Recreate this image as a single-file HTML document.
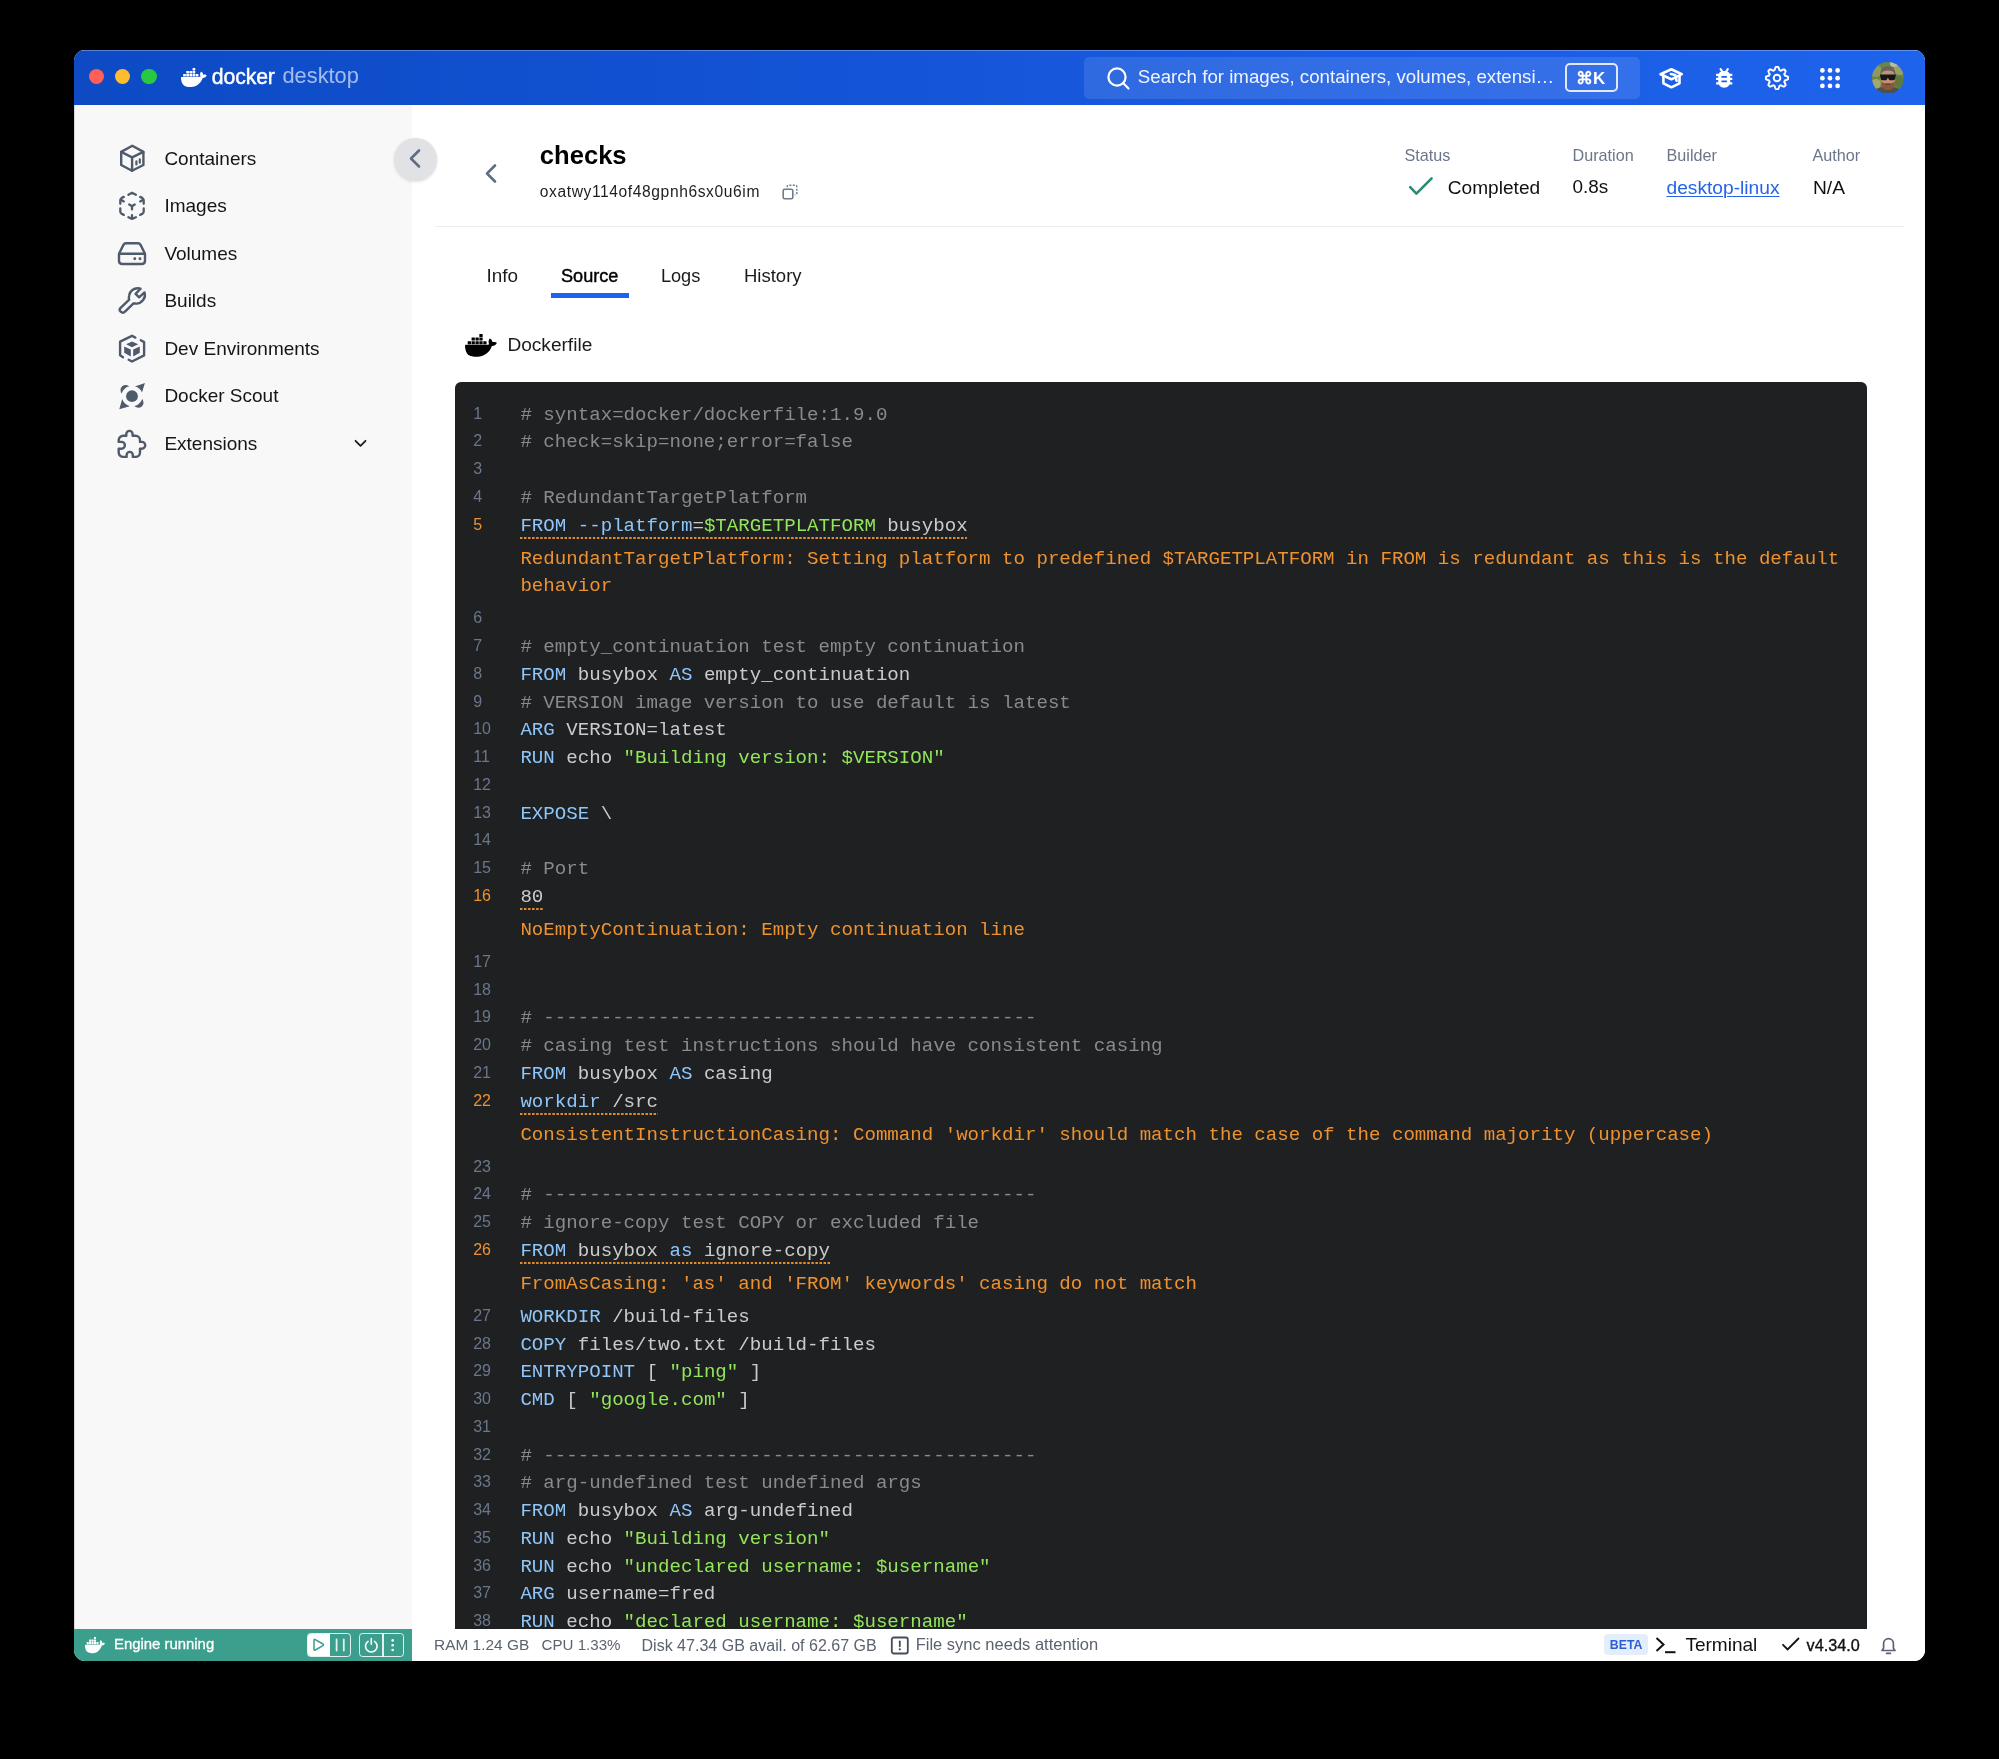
<!DOCTYPE html><html><head><meta charset="utf-8"><style>
*{margin:0;padding:0;box-sizing:border-box}
html,body{width:1999px;height:1759px;background:#000;overflow:hidden}
body{font-family:"Liberation Sans",sans-serif;position:relative;-webkit-font-smoothing:antialiased}
.t,.code{transform:translateZ(0)}
.win{position:absolute;left:74px;top:50px;width:1851px;height:1610.5px;border-radius:11px;overflow:hidden;background:#fff}
.in{position:absolute;left:-74px;top:-50px;width:1999px;height:1759px}
.a{position:absolute}
.t{position:absolute;white-space:pre}
.tb{position:absolute;left:74px;top:50px;width:1851px;height:55px;background:linear-gradient(90deg,#0d4ac4 0%,#1252d3 35%,#1a5ce3 70%,#1e63ec 100%)}
.side{position:absolute;left:74px;top:105px;width:337.5px;height:1524px;background:#f8f8f8}
.code{position:absolute;left:454.8px;top:381.5px;width:1412.2px;height:1400px;background:#1f2022;border-radius:6px;font-family:"Liberation Mono",monospace}
.rows{position:absolute;left:0;top:18.5px;width:100%;will-change:transform}
.row{position:relative;height:27.75px;line-height:27.75px;white-space:pre}
.ln{position:absolute;left:18.2px;top:-0.5px;font-family:"Liberation Sans",sans-serif;font-size:16px;color:#6a778b}
.cd{position:absolute;left:65.4px;top:1.5px;font-size:19.11px;color:#cbcbcb}
.wn .ln{color:#ee9230}
.warn{position:relative;padding:5.25px 0;}
.warn .wl{position:relative;top:1.5px;height:27.75px;line-height:27.75px;padding-left:65.4px;font-size:19.11px;color:#ee9230;white-space:pre}
.k{color:#8ec6fa}.c{color:#8a8a8a}.s{color:#93e65a}
.ul{position:absolute;left:65px;top:25.8px;height:2px;background:linear-gradient(90deg,#e08d30 0,#e08d30 2.1px,transparent 2.1px) 0 0/4.06px 2px repeat-x}
.sb{position:absolute;left:74px;top:1629px;width:1851px;height:31.5px;background:#fff}
.eng{position:absolute;left:74px;top:1629px;width:337.5px;height:31.5px;background:#3c9f8d}
.navt{font-size:19px;color:#151515}
</style></head><body><div class="win"><div class="in"><div class="tb"></div><div class="a" style="left:74px;top:50px;width:1851px;height:1px;background:rgba(255,255,255,.3)"></div><div class="a" style="left:88.55px;top:68.55px;width:15.5px;height:15.5px;border-radius:50%;background:#fe5f57"></div><div class="a" style="left:114.75px;top:68.55px;width:15.5px;height:15.5px;border-radius:50%;background:#febc2e"></div><div class="a" style="left:141.45px;top:68.55px;width:15.5px;height:15.5px;border-radius:50%;background:#28c840"></div><svg class="a" style="left:180.5px;top:68px;width:25.5px;height:19px;overflow:visible" viewBox="0 3.39 23.86 17.22" preserveAspectRatio="none"><path fill="#fff" d="M13.983 11.078h2.119a.186.186 0 00.186-.185V9.006a.186.186 0 00-.186-.186h-2.119a.185.185 0 00-.185.185v1.888c0 .102.083.185.185.185m-2.954-5.43h2.118a.186.186 0 00.186-.186V3.574a.186.186 0 00-.186-.185h-2.118a.185.185 0 00-.185.185v1.888c0 .102.082.185.185.185m0 2.716h2.118a.187.187 0 00.186-.186V6.29a.186.186 0 00-.186-.185h-2.118a.185.185 0 00-.185.185v1.887c0 .102.082.185.185.186m-2.93 0h2.12a.186.186 0 00.184-.186V6.29a.185.185 0 00-.185-.185H8.1a.185.185 0 00-.185.185v1.887c0 .102.083.185.185.186m-2.964 0h2.119a.186.186 0 00.185-.186V6.29a.185.185 0 00-.185-.185H5.136a.186.186 0 00-.186.185v1.887c0 .102.084.185.186.186m5.893 2.715h2.118a.186.186 0 00.186-.185V9.006a.186.186 0 00-.186-.186h-2.118a.185.185 0 00-.185.185v1.888c0 .102.082.185.185.185m-2.93 0h2.12a.185.185 0 00.184-.185V9.006a.185.185 0 00-.184-.186h-2.12a.185.185 0 00-.184.185v1.888c0 .102.083.185.185.185m-2.964 0h2.119a.185.185 0 00.185-.185V9.006a.185.185 0 00-.184-.186h-2.12a.186.186 0 00-.186.186v1.887c0 .102.084.185.186.185m-2.92 0h2.12a.185.185 0 00.184-.185V9.006a.185.185 0 00-.184-.186h-2.12a.185.185 0 00-.184.185v1.888c0 .102.082.185.185.185M23.763 9.89c-.065-.051-.672-.51-1.954-.51-.338.001-.676.03-1.01.087-.248-1.7-1.653-2.53-1.716-2.566l-.344-.199-.226.327c-.284.438-.49.922-.612 1.43-.23.97-.09 1.882.403 2.661-.595.332-1.55.413-1.744.42H.751a.751.751 0 00-.75.748 11.376 11.376 0 00.692 4.062c.545 1.428 1.355 2.48 2.41 3.124 1.18.723 3.1 1.137 5.275 1.137.983.003 1.963-.086 2.93-.266a12.248 12.248 0 003.823-1.389c.98-.567 1.86-1.288 2.61-2.136 1.252-1.418 1.998-2.997 2.553-4.4h.221c1.372 0 2.215-.549 2.68-1.009.309-.293.55-.65.707-1.046l.098-.288Z"/></svg><div class="t " style="left:211.80px;top:65.55px;font-size:21.2px;line-height:21.2px;color:#fff;-webkit-text-stroke:0.45px #fff;letter-spacing:-0.1px">docker</div><div class="t " style="left:282.50px;top:65.05px;font-size:21.8px;line-height:21.8px;color:rgba(255,255,255,.62)">desktop</div><div class="a" style="left:1084.2px;top:57.1px;width:555.5px;height:42.2px;border-radius:5px;background:rgba(255,255,255,.11)"></div><svg class="a" style="left:1105px;top:65px;width:26px;height:26px" viewBox="0 0 26 26"><circle cx="12" cy="12" r="8.6" fill="none" stroke="#fff" stroke-width="2.2"/><path d="M18.3 18.3l5.2 5.2" stroke="#fff" stroke-width="2.2" stroke-linecap="round"/></svg><div class="t " style="left:1137.80px;top:68.17px;font-size:18.7px;line-height:18.7px;color:rgba(255,255,255,.93)">Search for images, containers, volumes, extensi…</div><div class="a" style="left:1565px;top:63.4px;width:52.8px;height:29px;border:2px solid rgba(255,255,255,.85);border-radius:5px"></div><div class="t " style="left:1576.00px;top:70.11px;font-size:17px;line-height:17px;color:#fff;font-weight:bold">⌘K</div><svg class="a" style="left:1652px;top:60px;width:36px;height:36px" viewBox="0 0 36 36"><g fill="none" stroke="#fff" stroke-width="2.6" stroke-linejoin="round" stroke-linecap="round"><path d="M8.5 14.2L19.4 9.3 29.8 14.2 19.4 19.3Z"/><path d="M11.4 15.6V23.3L19.4 27.3 27.5 23.3V15.6"/><path d="M18.9 14L23.2 14.9 24.6 20.8"/></g></svg><svg class="a" style="left:1715px;top:68px;width:19px;height:21px" viewBox="0 0 19 21"><path fill="#fff" d="M3.2 8.3C3.2 5 5.5 3.1 9.2 3.1S15.2 5 15.2 8.3V13.6C15.2 17.4 12.7 19.7 9.2 19.7S3.2 17.4 3.2 13.6Z"/><g stroke="#fff" stroke-width="2.1" stroke-linecap="round"><path d="M5.6 1.1L7.3 3.6M12.8 1.1L11.1 3.6"/><path d="M1.1 6.9H17.3M1.1 10.9H17.3M1.1 15.4H17.3" stroke-linecap="butt"/></g><g stroke="#1c60e8" stroke-width="1.9" stroke-linecap="round"><path d="M7.2 8.9H11.2M7.2 13.4H11.2"/></g></svg><svg class="a" style="left:1765px;top:65.8px;width:24px;height:24px" viewBox="0 0 24 24"><path fill="none" stroke="#fff" stroke-width="2" stroke-linejoin="round" d="M12.00 0.85 L12.22 0.85 L12.44 0.86 L12.66 0.87 L12.87 0.88 L13.09 0.97 L13.28 1.22 L13.45 1.51 L13.61 1.82 L13.76 2.15 L13.89 2.49 L14.01 2.82 L14.12 3.16 L14.22 3.47 L14.32 3.77 L14.41 4.04 L14.55 4.15 L14.70 4.21 L14.86 4.26 L15.01 4.32 L15.16 4.38 L15.31 4.44 L15.45 4.51 L15.60 4.58 L15.75 4.65 L15.92 4.67 L16.18 4.54 L16.46 4.40 L16.75 4.25 L17.06 4.09 L17.39 3.93 L17.72 3.79 L18.06 3.66 L18.39 3.56 L18.72 3.48 L19.03 3.43 L19.24 3.52 L19.41 3.67 L19.57 3.81 L19.73 3.96 L19.88 4.12 L20.04 4.27 L20.19 4.43 L20.33 4.59 L20.48 4.76 L20.57 4.97 L20.52 5.28 L20.44 5.61 L20.34 5.94 L20.21 6.28 L20.07 6.61 L19.91 6.94 L19.75 7.25 L19.60 7.54 L19.46 7.82 L19.33 8.08 L19.35 8.25 L19.42 8.40 L19.49 8.55 L19.56 8.69 L19.62 8.84 L19.68 8.99 L19.74 9.14 L19.79 9.30 L19.85 9.45 L19.96 9.59 L20.23 9.68 L20.53 9.78 L20.84 9.88 L21.18 9.99 L21.51 10.11 L21.85 10.24 L22.18 10.39 L22.49 10.55 L22.78 10.72 L23.03 10.91 L23.12 11.13 L23.13 11.34 L23.14 11.56 L23.15 11.78 L23.15 12.00 L23.15 12.22 L23.14 12.44 L23.13 12.66 L23.12 12.87 L23.03 13.09 L22.78 13.28 L22.49 13.45 L22.18 13.61 L21.85 13.76 L21.51 13.89 L21.18 14.01 L20.84 14.12 L20.53 14.22 L20.23 14.32 L19.96 14.41 L19.85 14.55 L19.79 14.70 L19.74 14.86 L19.68 15.01 L19.62 15.16 L19.56 15.31 L19.49 15.45 L19.42 15.60 L19.35 15.75 L19.33 15.92 L19.46 16.18 L19.60 16.46 L19.75 16.75 L19.91 17.06 L20.07 17.39 L20.21 17.72 L20.34 18.06 L20.44 18.39 L20.52 18.72 L20.57 19.03 L20.48 19.24 L20.33 19.41 L20.19 19.57 L20.04 19.73 L19.88 19.88 L19.73 20.04 L19.57 20.19 L19.41 20.33 L19.24 20.48 L19.03 20.57 L18.72 20.52 L18.39 20.44 L18.06 20.34 L17.72 20.21 L17.39 20.07 L17.06 19.91 L16.75 19.75 L16.46 19.60 L16.18 19.46 L15.92 19.33 L15.75 19.35 L15.60 19.42 L15.45 19.49 L15.31 19.56 L15.16 19.62 L15.01 19.68 L14.86 19.74 L14.70 19.79 L14.55 19.85 L14.41 19.96 L14.32 20.23 L14.22 20.53 L14.12 20.84 L14.01 21.18 L13.89 21.51 L13.76 21.85 L13.61 22.18 L13.45 22.49 L13.28 22.78 L13.09 23.03 L12.87 23.12 L12.66 23.13 L12.44 23.14 L12.22 23.15 L12.00 23.15 L11.78 23.15 L11.56 23.14 L11.34 23.13 L11.13 23.12 L10.91 23.03 L10.72 22.78 L10.55 22.49 L10.39 22.18 L10.24 21.85 L10.11 21.51 L9.99 21.18 L9.88 20.84 L9.78 20.53 L9.68 20.23 L9.59 19.96 L9.45 19.85 L9.30 19.79 L9.14 19.74 L8.99 19.68 L8.84 19.62 L8.69 19.56 L8.55 19.49 L8.40 19.42 L8.25 19.35 L8.08 19.33 L7.82 19.46 L7.54 19.60 L7.25 19.75 L6.94 19.91 L6.61 20.07 L6.28 20.21 L5.94 20.34 L5.61 20.44 L5.28 20.52 L4.97 20.57 L4.76 20.48 L4.59 20.33 L4.43 20.19 L4.27 20.04 L4.12 19.88 L3.96 19.73 L3.81 19.57 L3.67 19.41 L3.52 19.24 L3.43 19.03 L3.48 18.72 L3.56 18.39 L3.66 18.06 L3.79 17.72 L3.93 17.39 L4.09 17.06 L4.25 16.75 L4.40 16.46 L4.54 16.18 L4.67 15.92 L4.65 15.75 L4.58 15.60 L4.51 15.45 L4.44 15.31 L4.38 15.16 L4.32 15.01 L4.26 14.86 L4.21 14.70 L4.15 14.55 L4.04 14.41 L3.77 14.32 L3.47 14.22 L3.16 14.12 L2.82 14.01 L2.49 13.89 L2.15 13.76 L1.82 13.61 L1.51 13.45 L1.22 13.28 L0.97 13.09 L0.88 12.87 L0.87 12.66 L0.86 12.44 L0.85 12.22 L0.85 12.00 L0.85 11.78 L0.86 11.56 L0.87 11.34 L0.88 11.13 L0.97 10.91 L1.22 10.72 L1.51 10.55 L1.82 10.39 L2.15 10.24 L2.49 10.11 L2.82 9.99 L3.16 9.88 L3.47 9.78 L3.77 9.68 L4.04 9.59 L4.15 9.45 L4.21 9.30 L4.26 9.14 L4.32 8.99 L4.38 8.84 L4.44 8.69 L4.51 8.55 L4.58 8.40 L4.65 8.25 L4.67 8.08 L4.54 7.82 L4.40 7.54 L4.25 7.25 L4.09 6.94 L3.93 6.61 L3.79 6.28 L3.66 5.94 L3.56 5.61 L3.48 5.28 L3.43 4.97 L3.52 4.76 L3.67 4.59 L3.81 4.43 L3.96 4.27 L4.12 4.12 L4.27 3.96 L4.43 3.81 L4.59 3.67 L4.76 3.52 L4.97 3.43 L5.28 3.48 L5.61 3.56 L5.94 3.66 L6.28 3.79 L6.61 3.93 L6.94 4.09 L7.25 4.25 L7.54 4.40 L7.82 4.54 L8.08 4.67 L8.25 4.65 L8.40 4.58 L8.55 4.51 L8.69 4.44 L8.84 4.38 L8.99 4.32 L9.14 4.26 L9.30 4.21 L9.45 4.15 L9.59 4.04 L9.68 3.77 L9.78 3.47 L9.88 3.16 L9.99 2.82 L10.11 2.49 L10.24 2.15 L10.39 1.82 L10.55 1.51 L10.72 1.22 L10.91 0.97 L11.13 0.88 L11.34 0.87 L11.56 0.86 L11.78 0.85 L12.00 0.85Z"/><circle cx="12" cy="12" r="3.3" fill="none" stroke="#fff" stroke-width="2"/></svg><svg class="a" style="left:1819.8px;top:67.7px;width:21px;height:21px" viewBox="0 0 21 21" fill="#fff"><circle cx="2.4" cy="2.4" r="2.35"/><circle cx="2.4" cy="10.15" r="2.35"/><circle cx="2.4" cy="17.9" r="2.35"/><circle cx="10.0" cy="2.4" r="2.35"/><circle cx="10.0" cy="10.15" r="2.35"/><circle cx="10.0" cy="17.9" r="2.35"/><circle cx="17.599999999999998" cy="2.4" r="2.35"/><circle cx="17.599999999999998" cy="10.15" r="2.35"/><circle cx="17.599999999999998" cy="17.9" r="2.35"/></svg><svg class="a" style="left:1872px;top:61.6px;width:31.8px;height:31.8px" viewBox="0 0 32 32"><defs><clipPath id="av"><circle cx="16" cy="16" r="16"/></clipPath><filter id="bl" x="-10%" y="-10%" width="120%" height="120%"><feGaussianBlur stdDeviation="0.6"/></filter></defs><g clip-path="url(#av)"><g filter="url(#bl)"><rect width="32" height="32" fill="#6d8446"/><circle cx="4" cy="9" r="6" fill="#8e9a5c"/><circle cx="28" cy="7" r="6" fill="#9aa06a"/><circle cx="27" cy="20" r="6" fill="#5d7a3c"/><circle cx="4" cy="22" r="5" fill="#a3a86a"/><circle cx="22" cy="1" r="4" fill="#b8bda0"/><path d="M2 32c1-5 5-7 14-7s13 2 14 7z" fill="#4d4f52"/><ellipse cx="16" cy="17" rx="7.4" ry="9.8" fill="#c29275"/><path d="M8.5 12.5C8.3 7 11 4.2 16 4.2S23.7 7 23.5 12.5C22.5 9.5 20 8.6 16 8.6S9.5 9.5 8.5 12.5Z" fill="#6a645c"/><path d="M9 19.5c.5 5.5 3 8.8 7 8.8s6.5-3.3 7-8.8c-1.5 1.3-3.5 2-7 2s-5.5-.7-7-2z" fill="#8c573a"/><path d="M13.5 22.3h5" stroke="#5b3424" stroke-width="0.9"/><path d="M8.2 12.6h15.6v1.6l-.7 2.8c-.3 1-1.2 1.4-2.5 1.4h-2.1c-1 0-1.6-.6-1.9-1.5l-.6-1.6-.6 1.6c-.3.9-.9 1.5-1.9 1.5h-2.1c-1.3 0-2.2-.4-2.5-1.4l-.7-2.8z" fill="#121212"/></g></g></svg><div class="side"></div><div class="a" style="left:74px;top:105px;width:1px;height:1524px;background:#d6d6d6"></div><div class="t navt" style="left:164.40px;top:148.62px;font-size:19px;line-height:19px;">Containers</div><div class="t navt" style="left:164.40px;top:196.12px;font-size:19px;line-height:19px;">Images</div><div class="t navt" style="left:164.40px;top:243.62px;font-size:19px;line-height:19px;">Volumes</div><div class="t navt" style="left:164.40px;top:291.12px;font-size:19px;line-height:19px;">Builds</div><div class="t navt" style="left:164.40px;top:338.62px;font-size:19px;line-height:19px;">Dev Environments</div><div class="t navt" style="left:164.40px;top:386.12px;font-size:19px;line-height:19px;">Docker Scout</div><div class="t navt" style="left:164.40px;top:433.62px;font-size:19px;line-height:19px;">Extensions</div><svg class="a" style="left:112px;top:140px;width:36px;height:36px" viewBox="0 0 36 36"><g fill="none" stroke="#4f5a6b" stroke-width="2.4" stroke-linejoin="round" stroke-linecap="round"><path d="M20.3 5.8L31.4 11.9V25L20 30.7 9.2 25V11.9Z"/><path d="M9.2 11.9L20.1 17.3 31.4 11.9M20.1 17.3V30.7"/><path d="M24.4 21.3V24.4M27.8 19.4V22.7" stroke-width="2.2"/></g></svg><svg class="a" style="left:116px;top:188px;width:36px;height:36px" viewBox="0 0 36 36"><g fill="none" stroke="#4f5a6b" stroke-width="2.3" stroke-linecap="round" stroke-linejoin="round"><path d="M12.4 6.8L16 4.8 19.9 6.8"/><path d="M4.3 15.8V12.3Q4.3 10.7 5.7 9.9L7.8 8.9M4.6 11.4L7.8 13.4"/><path d="M27.7 15.8V12.3Q27.7 10.7 26.3 9.9L24.2 8.9M27.4 11.4L24.2 13.4"/><path d="M4.3 20.3V23.6Q4.3 25 5.6 25.8L7.8 26.9"/><path d="M27.7 20.3V23.6Q27.7 25 26.4 25.8L24.2 26.9"/><path d="M12.4 29.3L16 30.9 19.9 29.3M16 27.2V30.9"/><path d="M13.2 16.5L16 18.2 18.7 16.5M16 18.2V21.4"/></g></svg><svg class="a" style="left:114px;top:236px;width:36px;height:36px" viewBox="0 0 36 36"><g fill="none" stroke="#4f5a6b" stroke-width="2.4" stroke-linejoin="round"><path d="M5 17.8L9.3 9.1Q10.2 7.3 12.2 7.3H23.8Q25.8 7.3 26.7 9.1L31 17.8V24.8Q31 28 27.8 28H8.2Q5 28 5 24.8Z"/><path d="M5 17.8H31"/></g><circle cx="20.8" cy="22.8" r="1.45" fill="#4f5a6b"/><circle cx="26" cy="22.8" r="1.45" fill="#4f5a6b"/></svg><svg class="a" style="left:114px;top:283px;width:36px;height:36px" viewBox="0 0 36 36"><path d="M6.4 25.1L15.2 16.6C14.8 15.4 14.8 13.8 15.2 12.2C16.1 7.8 19.9 5 24 5.2L26.6 5.7 21.6 10.9 25.1 14.3 30.5 9.4C31.3 11.8 31 14.6 29.1 17.1 27.1 19.6 24.6 20.8 22.1 20.6 21.1 20.5 20.1 20.2 19.5 20.4L11 28.6C9.8 29.8 7.9 29.8 6.7 28.7 5.5 27.5 5.3 26.2 6.4 25.1Z" fill="none" stroke="#4f5a6b" stroke-width="2.4" stroke-linejoin="round"/></svg><svg class="a" style="left:114px;top:330px;width:36px;height:36px" viewBox="0 0 36 36"><g fill="none" stroke="#4f5a6b" stroke-width="2.4" stroke-linecap="round" stroke-linejoin="round"><path d="M21.3 7.6L18 5.8 6.1 11.7V25.2L9 27.2"/><path d="M26.8 10.2L30.1 12.1V25.4L18 31.5 14.7 29.7"/></g><g fill="#4f5a6b"><path d="M12.1 14.3L18 11.5 24.2 14.3 18 17.2Z"/><path d="M10.2 16.4L16.8 19.6V26.4L10.2 22.7Z"/><path d="M25.8 16.4L19.2 19.6V26.4L25.8 22.7Z"/></g></svg><svg class="a" style="left:114px;top:377px;width:36px;height:36px" viewBox="0 0 36 36"><g fill="#4f5a6b"><circle cx="18" cy="19.2" r="5.9"/><path d="M7.6 16.6C5.8 13.5 6.5 10.5 8.5 9 10.5 7.5 13 7.8 15.3 9.3 12 10 9 12.5 7.6 16.6Z"/><path d="M20.9 9.4L30.9 6.1 28 15.6C27 12.5 24.5 10 20.9 9.4Z"/><path d="M8.2 22.1C9.5 25.5 12 28 15.8 29.3L5.3 32.3Z"/><path d="M28.2 22.1C30.2 25 29.8 28 27.5 29.8 25.5 31.3 22.5 30.8 20.3 29.3 24 28.5 27 25.5 28.2 22.1Z"/></g></svg><svg class="a" style="left:114px;top:425px;width:36px;height:36px" viewBox="0 0 36 36"><path d="M12.3 10.8V9A3.15 3.15 0 0 1 18.6 9V10.8H21.5A4.5 4.5 0 0 1 26 15.3V16.9H27.8A3.4 3.4 0 0 1 27.8 23.7H26V27.4A4.5 4.5 0 0 1 21.5 31.9H18.8V30A3.1 3.1 0 0 0 12.6 30V31.9H9.2A4.5 4.5 0 0 1 4.7 27.4V23.7H7.5A3.4 3.4 0 0 0 7.5 16.9H4.7V15.3A4.5 4.5 0 0 1 9.2 10.8Z" fill="none" stroke="#4f5a6b" stroke-width="2.4" stroke-linejoin="round"/></svg><svg class="a" style="left:353px;top:437px;width:15px;height:12px" viewBox="0 0 15 12"><path d="M2.5 3.8l5 5 5-5" fill="none" stroke="#1b1b1b" stroke-width="1.8" stroke-linecap="round" stroke-linejoin="round"/></svg><div class="a" style="left:394px;top:138px;width:42.5px;height:42.5px;border-radius:50%;background:#e1e2e6;box-shadow:0 1px 3px rgba(0,0,0,.12)"></div><svg class="a" style="left:405px;top:146px;width:20px;height:25px" viewBox="0 0 20 25"><path d="M14 4.5l-8 8 8 8" fill="none" stroke="#5f6d84" stroke-width="2.6" stroke-linecap="round" stroke-linejoin="round"/></svg><svg class="a" style="left:481px;top:161px;width:20px;height:25px" viewBox="0 0 20 25"><path d="M14 4.5l-8 8 8 8" fill="none" stroke="#5f6d84" stroke-width="2.6" stroke-linecap="round" stroke-linejoin="round"/></svg><div class="t " style="left:539.80px;top:142.73px;font-size:25.6px;line-height:25.6px;color:#000;font-weight:bold">checks</div><div class="t " style="left:539.80px;top:184.19px;font-size:15.6px;line-height:15.6px;color:#1e1e1e;letter-spacing:0.6px">oxatwy114of48gpnh6sx0u6im</div><svg class="a" style="left:781px;top:183px;width:18px;height:18px" viewBox="0 0 18 18"><rect x="2.2" y="6.2" width="9.6" height="9.6" rx="1.5" fill="none" stroke="#6f7a8d" stroke-width="1.6"/><path d="M6.2 4.2V3.5c0-.8.6-1.3 1.3-1.3h7c.8 0 1.3.6 1.3 1.3v7c0 .8-.6 1.3-1.3 1.3h-.7" fill="none" stroke="#6f7a8d" stroke-width="1.4" stroke-dasharray="2 1.4"/></svg><div class="t " style="left:1404.50px;top:146.54px;font-size:16.2px;line-height:16.2px;color:#6b7689">Status</div><div class="t " style="left:1572.50px;top:146.54px;font-size:16.2px;line-height:16.2px;color:#6b7689">Duration</div><div class="t " style="left:1666.50px;top:146.54px;font-size:16.2px;line-height:16.2px;color:#6b7689">Builder</div><div class="t " style="left:1812.50px;top:146.54px;font-size:16.2px;line-height:16.2px;color:#6b7689">Author</div><svg class="a" style="left:1407px;top:175px;width:28px;height:22px" viewBox="0 0 28 22"><path d="M3.2 12.2l6.2 6.4L24.6 3.4" fill="none" stroke="#2d8a74" stroke-width="2.6" stroke-linecap="round" stroke-linejoin="round"/></svg><div class="t " style="left:1447.80px;top:177.73px;font-size:19.1px;line-height:19.1px;color:#111">Completed</div><div class="t " style="left:1572.50px;top:177.90px;font-size:18.9px;line-height:18.9px;color:#111">0.8s</div><div class="t " style="left:1666.50px;top:177.65px;font-size:19.2px;line-height:19.2px;color:#2563e8;text-decoration:underline;text-underline-offset:2px;text-decoration-thickness:1px">desktop-linux</div><div class="t " style="left:1813.00px;top:177.65px;font-size:19.2px;line-height:19.2px;color:#111">N/A</div><div class="a" style="left:435px;top:226px;width:1468.5px;height:1px;background:#ececec"></div><div class="t " style="left:486.60px;top:266.70px;font-size:18.9px;line-height:18.9px;color:#1b1b1b">Info</div><div class="t " style="left:561.00px;top:266.68px;font-size:18.1px;line-height:18.1px;color:#000;-webkit-text-stroke:0.45px #000">Source</div><div class="t " style="left:660.90px;top:267.29px;font-size:18.2px;line-height:18.2px;color:#1b1b1b">Logs</div><div class="t " style="left:744.00px;top:267.04px;font-size:18.5px;line-height:18.5px;color:#1b1b1b">History</div><div class="a" style="left:550.5px;top:293px;width:78.3px;height:4.6px;background:#1d63ed"></div><svg class="a" style="left:464.8px;top:334px;width:31.599999999999966px;height:22.80000000000001px;overflow:visible" viewBox="0 3.39 23.86 17.22" preserveAspectRatio="none"><path fill="#000" d="M13.983 11.078h2.119a.186.186 0 00.186-.185V9.006a.186.186 0 00-.186-.186h-2.119a.185.185 0 00-.185.185v1.888c0 .102.083.185.185.185m-2.954-5.43h2.118a.186.186 0 00.186-.186V3.574a.186.186 0 00-.186-.185h-2.118a.185.185 0 00-.185.185v1.888c0 .102.082.185.185.185m0 2.716h2.118a.187.187 0 00.186-.186V6.29a.186.186 0 00-.186-.185h-2.118a.185.185 0 00-.185.185v1.887c0 .102.082.185.185.186m-2.93 0h2.12a.186.186 0 00.184-.186V6.29a.185.185 0 00-.185-.185H8.1a.185.185 0 00-.185.185v1.887c0 .102.083.185.185.186m-2.964 0h2.119a.186.186 0 00.185-.186V6.29a.185.185 0 00-.185-.185H5.136a.186.186 0 00-.186.185v1.887c0 .102.084.185.186.186m5.893 2.715h2.118a.186.186 0 00.186-.185V9.006a.186.186 0 00-.186-.186h-2.118a.185.185 0 00-.185.185v1.888c0 .102.082.185.185.185m-2.93 0h2.12a.185.185 0 00.184-.185V9.006a.185.185 0 00-.184-.186h-2.12a.185.185 0 00-.184.185v1.888c0 .102.083.185.185.185m-2.964 0h2.119a.185.185 0 00.185-.185V9.006a.185.185 0 00-.184-.186h-2.12a.186.186 0 00-.186.186v1.887c0 .102.084.185.186.185m-2.92 0h2.12a.185.185 0 00.184-.185V9.006a.185.185 0 00-.184-.186h-2.12a.185.185 0 00-.184.185v1.888c0 .102.082.185.185.185M23.763 9.89c-.065-.051-.672-.51-1.954-.51-.338.001-.676.03-1.01.087-.248-1.7-1.653-2.53-1.716-2.566l-.344-.199-.226.327c-.284.438-.49.922-.612 1.43-.23.97-.09 1.882.403 2.661-.595.332-1.55.413-1.744.42H.751a.751.751 0 00-.75.748 11.376 11.376 0 00.692 4.062c.545 1.428 1.355 2.48 2.41 3.124 1.18.723 3.1 1.137 5.275 1.137.983.003 1.963-.086 2.93-.266a12.248 12.248 0 003.823-1.389c.98-.567 1.86-1.288 2.61-2.136 1.252-1.418 1.998-2.997 2.553-4.4h.221c1.372 0 2.215-.549 2.68-1.009.309-.293.55-.65.707-1.046l.098-.288Z"/></svg><div class="t " style="left:507.40px;top:335.43px;font-size:19.1px;line-height:19.1px;color:#1b1b1b">Dockerfile</div><div class="code"><div class="rows"><div class="row"><div class="ln">1</div><div class="cd"><span class="c"># syntax=docker/dockerfile:1.9.0</span></div></div><div class="row"><div class="ln">2</div><div class="cd"><span class="c"># check=skip=none;error=false</span></div></div><div class="row"><div class="ln">3</div><div class="cd"></div></div><div class="row"><div class="ln">4</div><div class="cd"><span class="c"># RedundantTargetPlatform</span></div></div><div class="row wn"><div class="ln">5</div><div class="cd"><span class="k">FROM</span> <span class="k">--platform</span>=<span class="s">$TARGETPLATFORM</span> busybox</div><div class="ul" style="width:447.24px"></div></div><div class="warn"><div class="wl">RedundantTargetPlatform: Setting platform to predefined $TARGETPLATFORM in FROM is redundant as this is the default</div><div class="wl">behavior</div></div><div class="row"><div class="ln">6</div><div class="cd"></div></div><div class="row"><div class="ln">7</div><div class="cd"><span class="c"># empty_continuation test empty continuation</span></div></div><div class="row"><div class="ln">8</div><div class="cd"><span class="k">FROM</span> busybox <span class="k">AS</span> empty_continuation</div></div><div class="row"><div class="ln">9</div><div class="cd"><span class="c"># VERSION image version to use default is latest</span></div></div><div class="row"><div class="ln">10</div><div class="cd"><span class="k">ARG</span> VERSION=latest</div></div><div class="row"><div class="ln">11</div><div class="cd"><span class="k">RUN</span> echo <span class="s">"Building version: $VERSION"</span></div></div><div class="row"><div class="ln">12</div><div class="cd"></div></div><div class="row"><div class="ln">13</div><div class="cd"><span class="k">EXPOSE</span> \</div></div><div class="row"><div class="ln">14</div><div class="cd"></div></div><div class="row"><div class="ln">15</div><div class="cd"><span class="c"># Port</span></div></div><div class="row wn"><div class="ln">16</div><div class="cd">80</div><div class="ul" style="width:22.94px"></div></div><div class="warn"><div class="wl">NoEmptyContinuation: Empty continuation line</div></div><div class="row"><div class="ln">17</div><div class="cd"></div></div><div class="row"><div class="ln">18</div><div class="cd"></div></div><div class="row"><div class="ln">19</div><div class="cd"><span class="c"># -------------------------------------------</span></div></div><div class="row"><div class="ln">20</div><div class="cd"><span class="c"># casing test instructions should have consistent casing</span></div></div><div class="row"><div class="ln">21</div><div class="cd"><span class="k">FROM</span> busybox <span class="k">AS</span> casing</div></div><div class="row wn"><div class="ln">22</div><div class="cd"><span class="k">workdir</span> /src</div><div class="ul" style="width:137.61px"></div></div><div class="warn"><div class="wl">ConsistentInstructionCasing: Command 'workdir' should match the case of the command majority (uppercase)</div></div><div class="row"><div class="ln">23</div><div class="cd"></div></div><div class="row"><div class="ln">24</div><div class="cd"><span class="c"># -------------------------------------------</span></div></div><div class="row"><div class="ln">25</div><div class="cd"><span class="c"># ignore-copy test COPY or excluded file</span></div></div><div class="row wn"><div class="ln">26</div><div class="cd"><span class="k">FROM</span> busybox <span class="k">as</span> ignore-copy</div><div class="ul" style="width:309.63px"></div></div><div class="warn"><div class="wl">FromAsCasing: 'as' and 'FROM' keywords' casing do not match</div></div><div class="row"><div class="ln">27</div><div class="cd"><span class="k">WORKDIR</span> /build-files</div></div><div class="row"><div class="ln">28</div><div class="cd"><span class="k">COPY</span> files/two.txt /build-files</div></div><div class="row"><div class="ln">29</div><div class="cd"><span class="k">ENTRYPOINT</span> [ <span class="s">"ping"</span> ]</div></div><div class="row"><div class="ln">30</div><div class="cd"><span class="k">CMD</span> [ <span class="s">"google.com"</span> ]</div></div><div class="row"><div class="ln">31</div><div class="cd"></div></div><div class="row"><div class="ln">32</div><div class="cd"><span class="c"># -------------------------------------------</span></div></div><div class="row"><div class="ln">33</div><div class="cd"><span class="c"># arg-undefined test undefined args</span></div></div><div class="row"><div class="ln">34</div><div class="cd"><span class="k">FROM</span> busybox <span class="k">AS</span> arg-undefined</div></div><div class="row"><div class="ln">35</div><div class="cd"><span class="k">RUN</span> echo <span class="s">"Building version"</span></div></div><div class="row"><div class="ln">36</div><div class="cd"><span class="k">RUN</span> echo <span class="s">"undeclared username: $username"</span></div></div><div class="row"><div class="ln">37</div><div class="cd"><span class="k">ARG</span> username=fred</div></div><div class="row"><div class="ln">38</div><div class="cd"><span class="k">RUN</span> echo <span class="s">"declared username: $username"</span></div></div></div></div><div class="sb"></div><div class="eng"></div><svg class="a" style="left:84.8px;top:1636.6px;width:19.799999999999997px;height:16.200000000000045px;overflow:visible" viewBox="0 3.39 23.86 17.22" preserveAspectRatio="none"><path fill="#fff" d="M13.983 11.078h2.119a.186.186 0 00.186-.185V9.006a.186.186 0 00-.186-.186h-2.119a.185.185 0 00-.185.185v1.888c0 .102.083.185.185.185m-2.954-5.43h2.118a.186.186 0 00.186-.186V3.574a.186.186 0 00-.186-.185h-2.118a.185.185 0 00-.185.185v1.888c0 .102.082.185.185.185m0 2.716h2.118a.187.187 0 00.186-.186V6.29a.186.186 0 00-.186-.185h-2.118a.185.185 0 00-.185.185v1.887c0 .102.082.185.185.186m-2.93 0h2.12a.186.186 0 00.184-.186V6.29a.185.185 0 00-.185-.185H8.1a.185.185 0 00-.185.185v1.887c0 .102.083.185.185.186m-2.964 0h2.119a.186.186 0 00.185-.186V6.29a.185.185 0 00-.185-.185H5.136a.186.186 0 00-.186.185v1.887c0 .102.084.185.186.186m5.893 2.715h2.118a.186.186 0 00.186-.185V9.006a.186.186 0 00-.186-.186h-2.118a.185.185 0 00-.185.185v1.888c0 .102.082.185.185.185m-2.93 0h2.12a.185.185 0 00.184-.185V9.006a.185.185 0 00-.184-.186h-2.12a.185.185 0 00-.184.185v1.888c0 .102.083.185.185.185m-2.964 0h2.119a.185.185 0 00.185-.185V9.006a.185.185 0 00-.184-.186h-2.12a.186.186 0 00-.186.186v1.887c0 .102.084.185.186.185m-2.92 0h2.12a.185.185 0 00.184-.185V9.006a.185.185 0 00-.184-.186h-2.12a.185.185 0 00-.184.185v1.888c0 .102.082.185.185.185M23.763 9.89c-.065-.051-.672-.51-1.954-.51-.338.001-.676.03-1.01.087-.248-1.7-1.653-2.53-1.716-2.566l-.344-.199-.226.327c-.284.438-.49.922-.612 1.43-.23.97-.09 1.882.403 2.661-.595.332-1.55.413-1.744.42H.751a.751.751 0 00-.75.748 11.376 11.376 0 00.692 4.062c.545 1.428 1.355 2.48 2.41 3.124 1.18.723 3.1 1.137 5.275 1.137.983.003 1.963-.086 2.93-.266a12.248 12.248 0 003.823-1.389c.98-.567 1.86-1.288 2.61-2.136 1.252-1.418 1.998-2.997 2.553-4.4h.221c1.372 0 2.215-.549 2.68-1.009.309-.293.55-.65.707-1.046l.098-.288Z"/></svg><div class="t " style="left:114.00px;top:1637.09px;font-size:14.9px;line-height:14.9px;color:#fff;-webkit-text-stroke:0.3px #fff">Engine running</div><div class="a" style="left:306.6px;top:1633px;width:44.3px;height:23.6px;border:1.8px solid rgba(255,255,255,.85);border-radius:3.5px;overflow:hidden"><div class="a" style="left:0;top:0;width:22px;height:100%;background:#fff"></div></div><svg class="a" style="left:306.6px;top:1633px;width:44.3px;height:23.6px" viewBox="0 0 44.3 23.6"><path d="M7 7.3Q7 5.9 8.2 6.6L16 11Q17 11.8 16 12.6L8.2 17Q7 17.7 7 16.3Z" fill="none" stroke="#3c9f8d" stroke-width="1.5" stroke-linejoin="round"/><path d="M29.6 6.4v11.2M36.8 6.4v11.2" stroke="rgba(255,255,255,.85)" stroke-width="1.8" stroke-linecap="round"/></svg><div class="a" style="left:359.4px;top:1633px;width:44.4px;height:23.6px;border:1.8px solid rgba(255,255,255,.85);border-radius:3.5px"></div><div class="a" style="left:382px;top:1633px;width:1.6px;height:23.6px;background:rgba(255,255,255,.85)"></div><svg class="a" style="left:359.4px;top:1633px;width:44.4px;height:23.6px" viewBox="0 0 44.4 23.6"><path d="M12.3 5.6v5.6" stroke="#fff" stroke-width="1.6" stroke-linecap="round"/><path d="M9.1 8.4a5.8 5.8 0 1 0 6.4 0" fill="none" stroke="#fff" stroke-width="1.6" stroke-linecap="round"/><circle cx="33.7" cy="7.4" r="1.3" fill="#fff"/><circle cx="33.7" cy="12.2" r="1.3" fill="#fff"/><circle cx="33.7" cy="17" r="1.3" fill="#fff"/></svg><div class="t " style="left:434.00px;top:1637.12px;font-size:15.45px;line-height:15.45px;color:#5b6270">RAM 1.24 GB</div><div class="t " style="left:541.60px;top:1637.42px;font-size:15.1px;line-height:15.1px;color:#5b6270">CPU 1.33%</div><div class="t " style="left:641.50px;top:1636.61px;font-size:16.05px;line-height:16.05px;color:#5b6270">Disk 47.34 GB avail. of 62.67 GB</div><svg class="a" style="left:890px;top:1635.5px;width:20px;height:19px" viewBox="0 0 20 19"><rect x="1.8" y="1.5" width="16" height="16" rx="2" fill="none" stroke="#454c58" stroke-width="1.8"/><path d="M9.8 5.3v5" stroke="#454c58" stroke-width="1.8" stroke-linecap="round"/><circle cx="9.8" cy="13.3" r="1.1" fill="#454c58"/></svg><div class="t " style="left:915.70px;top:1636.23px;font-size:16.5px;line-height:16.5px;color:#5b6270">File sync needs attention</div><div class="a" style="left:1604.3px;top:1634.2px;width:43.3px;height:20.8px;border-radius:4px;background:#e3edfb"></div><div class="t " style="left:1609.80px;top:1638.89px;font-size:12.3px;line-height:12.3px;color:#2a5fd6;font-weight:bold">BETA</div><svg class="a" style="left:1654px;top:1635px;width:24px;height:20px" viewBox="0 0 24 20"><path d="M2.5 3l7 6.5-7 6.5" fill="none" stroke="#111" stroke-width="2" stroke-linejoin="miter"/><path d="M11 17.2h10.5" stroke="#111" stroke-width="2"/></svg><div class="t " style="left:1685.40px;top:1634.87px;font-size:19.05px;line-height:19.05px;color:#111">Terminal</div><svg class="a" style="left:1780px;top:1636px;width:21px;height:17px" viewBox="0 0 21 17"><path d="M3 8.8l4.6 4.6L18.5 2.5" fill="none" stroke="#111" stroke-width="1.8" stroke-linecap="round"/></svg><div class="t " style="left:1806.60px;top:1637.29px;font-size:16.2px;line-height:16.2px;color:#111;-webkit-text-stroke:0.35px #111">v4.34.0</div><svg class="a" style="left:1878px;top:1635px;width:21px;height:21px" viewBox="0 0 21 21"><path d="M4 15.5h13l-1.6-2.2V8.6a4.9 4.9 0 0 0-9.8 0v4.7z" fill="none" stroke="#5b6270" stroke-width="1.7" stroke-linejoin="round"/><path d="M8.6 18.3h3.8" stroke="#5b6270" stroke-width="1.8" stroke-linecap="round"/></svg></div></div></body></html>
